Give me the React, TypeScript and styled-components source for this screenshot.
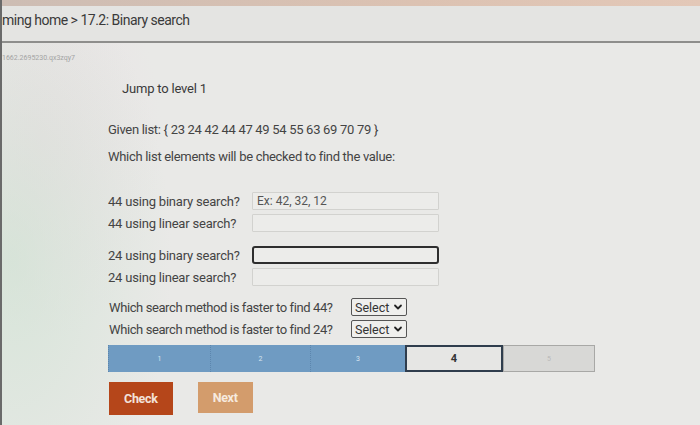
import styled, { createGlobalStyle } from 'styled-components';

const GlobalStyle = createGlobalStyle`
  html, body {
    margin: 0;
    padding: 0;
    width: 700px;
    height: 425px;
    overflow: hidden;
    background: #e9e9e7;
  }
  * {
    box-sizing: border-box;
  }
`;

const QUESTIONS = [
  [
    { label: '44 using binary search?', placeholder: 'Ex: 42, 32, 12', focused: false },
    { label: '44 using linear search?', placeholder: '', focused: false },
  ],
  [
    { label: '24 using binary search?', placeholder: '', focused: true },
    { label: '24 using linear search?', placeholder: '', focused: false },
  ],
];

const LEVELS = [
  { n: 1, width: 102 },
  { n: 2, width: 100 },
  { n: 3, width: 95 },
  { n: 4, width: 98 },
  { n: 5, width: 92 },
];
const CURRENT_LEVEL = 4;

const Chevron = () => (
  <svg width="10" height="10" viewBox="0 0 10 10">
    <path d="M2 3.5 L5 6.5 L8 3.5" fill="none" stroke="#222" strokeWidth="1.8" strokeLinecap="round" strokeLinejoin="round" />
  </svg>
);

const App = () => {
  return (
    <Page>
      <GlobalStyle />
      <Chrome />
      <Header>
        <Crumb>ming home &gt; 17.2: Binary search</Crumb>
      </Header>
      <Meta>1662.2695230.qx3zqy7</Meta>
      <Content>
        <JumpLevel>Jump to level 1</JumpLevel>
        <Prompt $gap={23}>Given list: {'{'} 23 24 42 44 47 49 54 55 63 69 70 79 {'}'}</Prompt>
        <Prompt $gap={8}>Which list elements will be checked to find the value:</Prompt>

        {QUESTIONS.map((group, gi) => (
          <Group key={gi} $top={gi === 0 ? 26 : 14}>
            {group.map((q) => (
              <QuestionRow key={q.label}>
                <Label>{q.label}</Label>
                <AnswerBox $focused={q.focused}>{q.placeholder}</AnswerBox>
              </QuestionRow>
            ))}
          </Group>
        ))}

        <Group $top={12}>
          {['44', '24'].map((n) => (
            <SelectRow key={n}>
              <Label $tight>Which search method is faster to find {n}?</Label>
              <SelectBox>
                Select
                <Chevron />
              </SelectBox>
            </SelectRow>
          ))}
        </Group>

        <Progress>
          {LEVELS.map((lvl) => (
            <Segment
              key={lvl.n}
              $done={lvl.n < CURRENT_LEVEL}
              $current={lvl.n === CURRENT_LEVEL}
              $width={lvl.width}
            >
              {lvl.n}
            </Segment>
          ))}
        </Progress>

        <Buttons>
          <ActionButton $variant="primary">Check</ActionButton>
          <ActionButton $variant="secondary">Next</ActionButton>
        </Buttons>
      </Content>
    </Page>
  );
};

export default App;

const Page = styled.div`
  width: 700px;
  height: 425px;
  font-family: Roboto, 'Liberation Sans', Arial, sans-serif;
  color: #3f3f3f;
  background:
    radial-gradient(ellipse 160px 300px at 10px 260px, rgba(200, 225, 205, 0.55), rgba(233, 233, 231, 0) 100%),
    radial-gradient(ellipse 120px 200px at 40px 140px, rgba(235, 215, 225, 0.45), rgba(233, 233, 231, 0) 100%),
    #e9e9e7;
  border-left: 2px solid #6a6a6a;
`;

const Chrome = styled.div`
  height: 6px;
  background: linear-gradient(90deg, #cdbdb4, #dcc2b2 60%, #e3c8b8);
`;

const Header = styled.div`
  height: 37px;
  padding-top: 6px;
  background: #e4e4e2;
  border-bottom: 2px solid #8e8e8c;
`;

const Crumb = styled.div`
  font-size: 14px;
  line-height: 17px;
  color: #3a3a3a;
  letter-spacing: -0.5px;
`;

const Meta = styled.div`
  margin-top: 11px;
  font-size: 7px;
  line-height: 9px;
  color: #a3a3a3;
`;

const Content = styled.div`
  padding-left: 106px;
`;

const JumpLevel = styled.div`
  margin-top: 18px;
  margin-left: 14px;
  font-size: 13px;
  line-height: 16px;
  color: #3a3a3a;
  letter-spacing: -0.2px;
`;

const Prompt = styled.div<{ $gap: number }>`
  margin-top: ${(p) => p.$gap}px;
  font-size: 13px;
  line-height: 19px;
  color: #444;
  letter-spacing: -0.3px;
`;

const Group = styled.div<{ $top: number }>`
  margin-top: ${(p) => p.$top}px;
  display: flex;
  flex-direction: column;
  gap: 4px;
`;

const QuestionRow = styled.div`
  display: grid;
  grid-template-columns: 144px 187px;
  align-items: center;
  height: 18px;
`;

const Label = styled.span<{ $tight?: boolean }>`
  font-size: 13px;
  color: #444;
  white-space: nowrap;
  letter-spacing: ${(p) => (p.$tight ? '-0.4px' : '-0.2px')};
`;

const AnswerBox = styled.div<{ $focused: boolean }>`
  height: 18px;
  padding: 0 4px;
  display: flex;
  align-items: center;
  font-size: 12px;
  color: #555;
  background: #ececea;
  border: ${(p) => (p.$focused ? '2px solid #2e2e2e' : '1px solid #d2d2cf')};
  border-radius: ${(p) => (p.$focused ? '3px' : '1px')};
`;

const SelectRow = styled.div`
  display: grid;
  grid-template-columns: 242px auto;
  align-items: center;
  height: 18px;
  padding-left: 1px;
`;

const SelectBox = styled.div`
  width: 56px;
  height: 18px;
  padding: 0 3px;
  display: flex;
  align-items: center;
  justify-content: space-between;
  font-size: 12.5px;
  color: #333;
  background: #efefed;
  border: 1px solid #555;
  border-radius: 2px;
`;

const Progress = styled.div`
  margin-top: 7px;
  display: flex;
  height: 27px;
  align-items: stretch;
`;

const Segment = styled.div<{ $done: boolean; $current: boolean; $width: number }>`
  width: ${(p) => p.$width}px;
  display: flex;
  align-items: center;
  justify-content: center;
  font-size: ${(p) => (p.$current ? '11px' : '7px')};
  font-weight: ${(p) => (p.$current ? 700 : 400)};
  color: ${(p) => (p.$current ? '#333' : p.$done ? '#d7e4f0' : '#b9b9b9')};
  background: ${(p) => (p.$done ? '#6f9bc2' : p.$current ? '#e6e6e4' : '#d8d8d6')};
  border: ${(p) => (p.$current ? '2px solid #2f3d4d' : p.$done ? 'none' : '1px solid #a8a8a6')};
  border-left: ${(p) => (p.$done ? '1px dotted rgba(80, 120, 160, 0.6)' : undefined)};
`;

const Buttons = styled.div`
  margin-top: 10px;
  margin-left: 1px;
  display: flex;
  align-items: flex-start;
  gap: 25px;
`;

const ActionButton = styled.div<{ $variant: 'primary' | 'secondary' }>`
  height: ${(p) => (p.$variant === 'primary' ? 33 : 31)}px;
  padding: 0 15px;
  display: flex;
  align-items: center;
  font-size: 12.5px;
  font-weight: 700;
  color: ${(p) => (p.$variant === 'primary' ? '#f3e2da' : '#f6eadf')};
  background: ${(p) => (p.$variant === 'primary' ? '#b5461a' : '#d39c6c')};
  letter-spacing: -0.3px;
`;
